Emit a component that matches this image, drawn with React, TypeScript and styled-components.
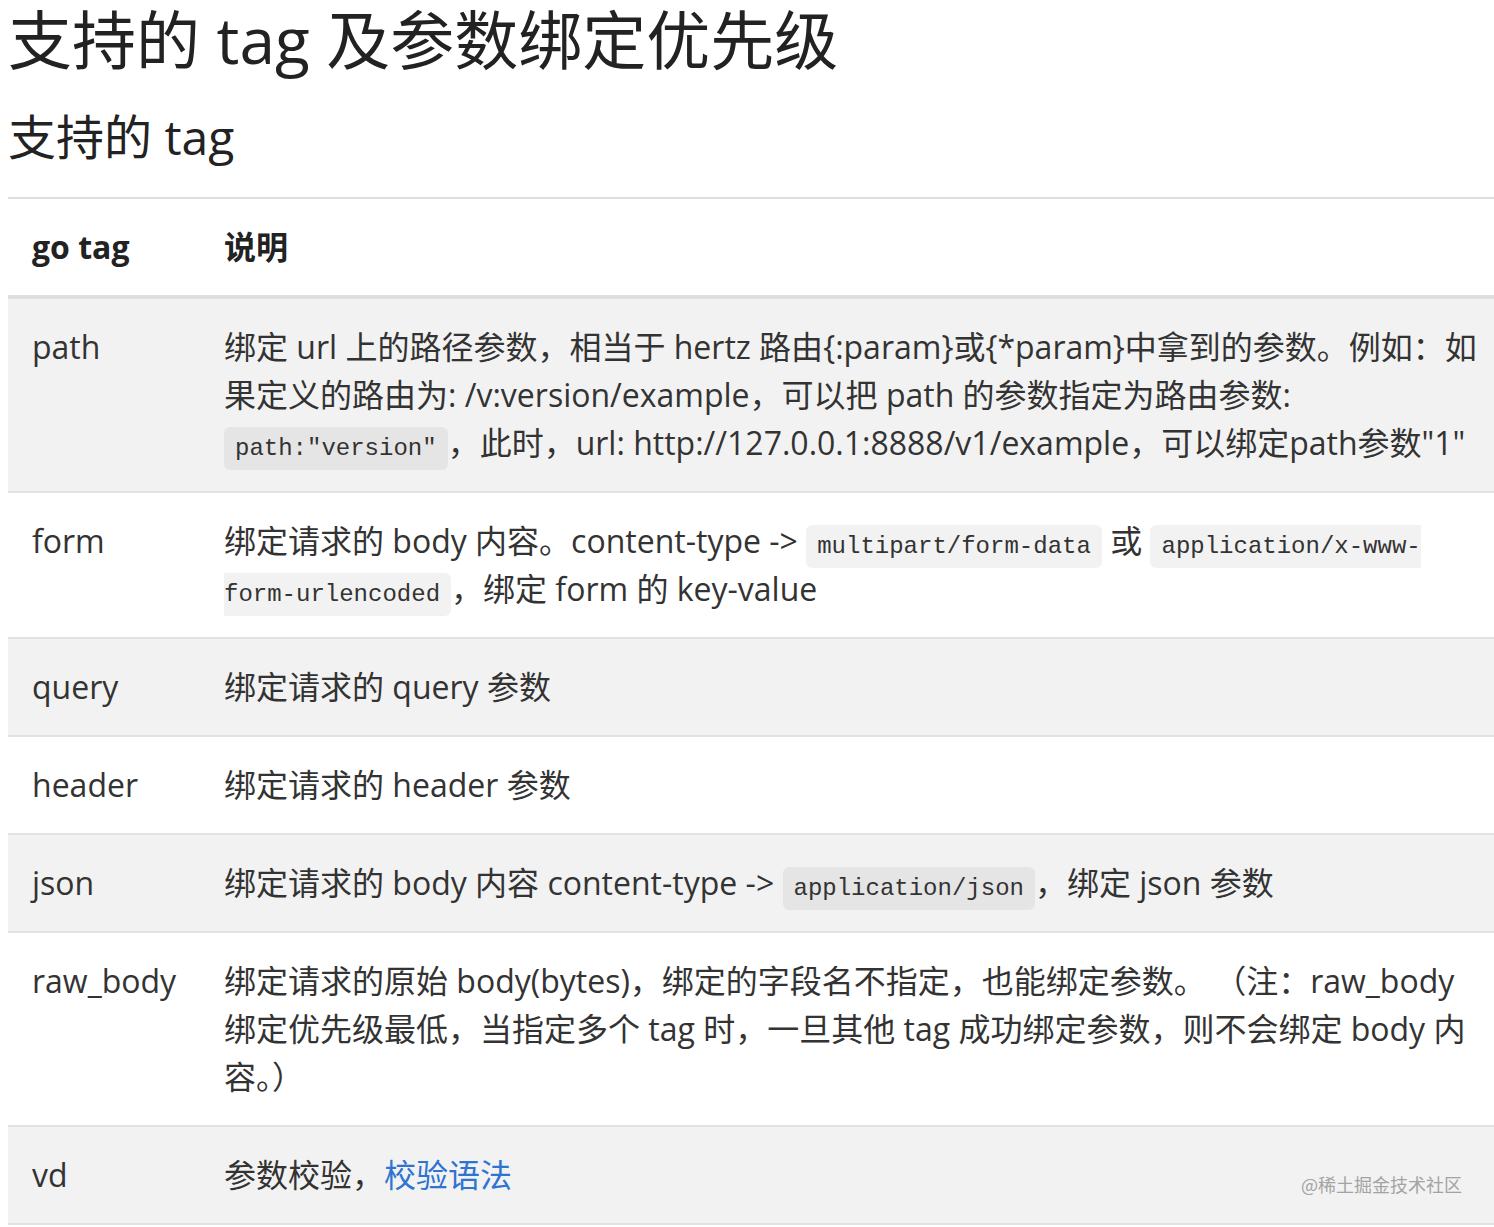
import styled, { createGlobalStyle } from "styled-components";

const GlobalStyle = createGlobalStyle`
  body {
    margin: 0 0 0 8px;
    background: #fff;
    color: #333;
    font-family: "Open Sans", "Noto Sans CJK SC", sans-serif;
  }
`;

const Page = styled.div`
  position: relative;
  width: 1486px;
`;

const Title = styled.h1`
  margin: 0;
  font-size: 64px;
  line-height: 80px;
  font-weight: 400;
  color: #222;
`;

const Subtitle = styled.h2`
  margin: 25px 0 28px;
  font-size: 48px;
  line-height: 64px;
  font-weight: 400;
  color: #222;
`;

const Table = styled.table`
  width: 100%;
  border-collapse: collapse;
  border-top: 2px solid #dedede;
  font-size: 32px;
  line-height: 48px;
  table-layout: fixed;
`;

const HeadCell = styled.th`
  padding: 24px 24px;
  text-align: left;
  font-weight: 700;
  color: #222;
  border-bottom: 4px solid #dfdfdf;
`;

const Row = styled.tr<{ $alt: boolean }>`
  background: ${(p) => (p.$alt ? "#f2f2f2" : "#fff")};
  border-bottom: 2px solid #e2e2e2;
`;

const Cell = styled.td`
  padding: 24px 24px;
  vertical-align: top;
  &:last-child {
    padding-right: 8px;
  }
`;

const Code = styled.code`
  font-family: "Liberation Mono", "DejaVu Sans Mono", monospace;
  font-size: 24px;
  line-height: 1;
  padding: 8px 11px;
  border-radius: 6px;
  background: rgba(0, 0, 0, 0.05);
  color: #333;
`;

const Link = styled.a`
  color: #2f74d0;
  text-decoration: none;
`;

const Watermark = styled.div`
  position: absolute;
  right: 32px;
  top: 1172px;
  font-size: 18px;
  line-height: 24px;
  color: #a3a3a3;
  font-family: "Noto Sans CJK SC", sans-serif;
`;

const rows: { tag: string; desc: React.ReactNode }[] = [
  {
    tag: "path",
    desc: (
      <>
        绑定 url 上的路径参数，相当于 hertz 路由{"{:param}"}或{"{*param}"}
        中拿到的参数。例如：如果定义的路由为: /v:version/example，可以把 path
        的参数指定为路由参数: <Code>path:"version"</Code>，此时，url:
        http://127.0.0.1:8888/v1/example，可以绑定path参数"1"
      </>
    ),
  },
  {
    tag: "form",
    desc: (
      <>
        绑定请求的 body 内容。content-type -&gt; <Code>multipart/form-data</Code> 或{" "}
        <Code>application/x-www-form-urlencoded</Code>，绑定 form 的 key-value
      </>
    ),
  },
  { tag: "query", desc: "绑定请求的 query 参数" },
  { tag: "header", desc: "绑定请求的 header 参数" },
  {
    tag: "json",
    desc: (
      <>
        绑定请求的 body 内容 content-type -&gt; <Code>application/json</Code>，绑定 json 参数
      </>
    ),
  },
  {
    tag: "raw_body",
    desc: "绑定请求的原始 body(bytes)，绑定的字段名不指定，也能绑定参数。 （注：raw_body 绑定优先级最低，当指定多个 tag 时，一旦其他 tag 成功绑定参数，则不会绑定 body 内容。）",
  },
  {
    tag: "vd",
    desc: (
      <>
        参数校验，<Link href="#">校验语法</Link>
      </>
    ),
  },
];

export default function App() {
  return (
    <Page>
      <GlobalStyle />
      <Title>支持的 tag 及参数绑定优先级</Title>
      <Subtitle>支持的 tag</Subtitle>
      <Table>
        <colgroup>
          <col style={{ width: 192 }} />
          <col />
        </colgroup>
        <thead>
          <tr>
            <HeadCell>go tag</HeadCell>
            <HeadCell>说明</HeadCell>
          </tr>
        </thead>
        <tbody>
          {rows.map((r, i) => (
            <Row key={r.tag} $alt={i % 2 === 0}>
              <Cell>{r.tag}</Cell>
              <Cell>{r.desc}</Cell>
            </Row>
          ))}
        </tbody>
      </Table>
      <Watermark>@稀土掘金技术社区</Watermark>
    </Page>
  );
}
